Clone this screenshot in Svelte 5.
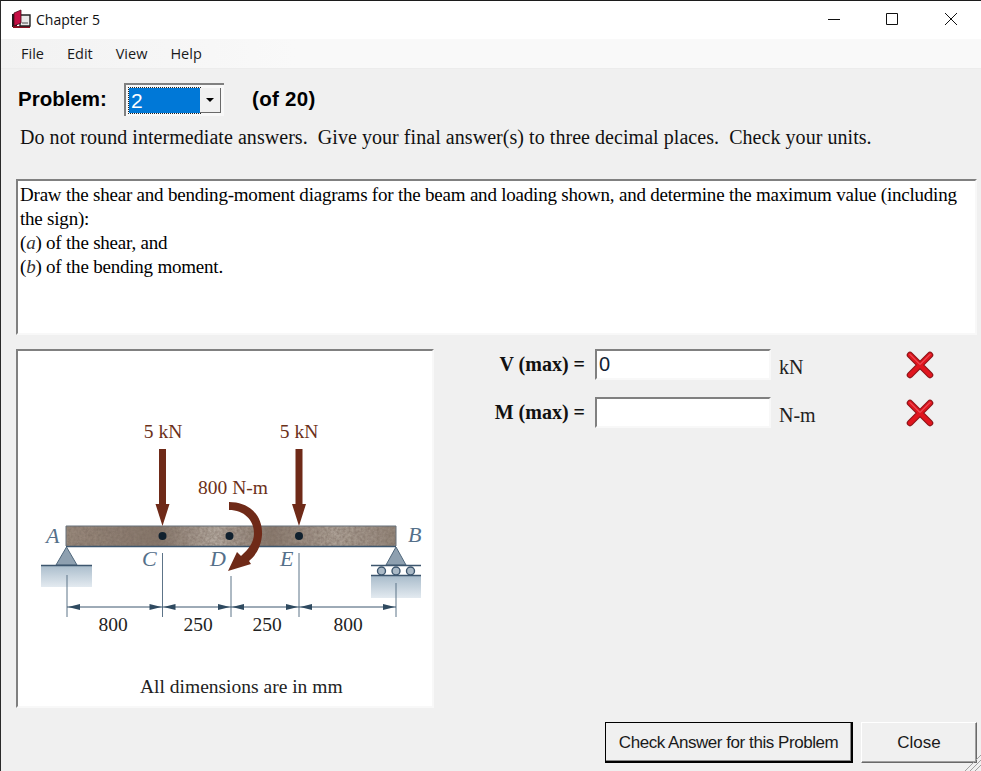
<script>
	let vMax = $state('0');
	let mMax = $state('');

	const menus = ['File', 'Edit', 'View', 'Help'];
	const forces = [162.5, 299];
	const dims = [
		{ from: 67, to: 162.5, text: '800', tx: 113 },
		{ from: 162.5, to: 231, text: '250', tx: 198 },
		{ from: 231, to: 299, text: '250', tx: 267 },
		{ from: 299, to: 396, text: '800', tx: 348 }
	];
</script>

{#snippet cross()}
	<svg class="cross" viewBox="0 0 30 30" width="30" height="30" aria-hidden="true">
		<path d="M5 5l20 20M25 5L5 25" stroke="#8a1418" stroke-width="6.500" stroke-linecap="round" fill="none" />
		<path d="M5 5l20 20M25 5L5 25" stroke="#e0161f" stroke-width="4.500" stroke-linecap="round" fill="none" />
		<path d="M5 4.500l10 10 10-10" stroke="#f56a74" stroke-width="1" stroke-linecap="round" fill="none" />
	</svg>
{/snippet}

<div class="window">
	<header class="titlebar">
		<svg class="app-icon" viewBox="0 0 20 20" width="20" height="20" aria-hidden="true">
			<path d="M1 5h5v13H1z" fill="#1c1c1c" />
			<path d="M2 17h17v2H2z" fill="#8a1022" />
			<path d="M9 6h10v11H9z" fill="#e8e8e8" stroke="#222" stroke-width="1.400" />
			<path d="M11 13h6v2h-6z" fill="#999" />
			<path d="M3 4l7-3v13l-7 3z" fill="#c40f44" stroke="#4a0a18" stroke-width="0.800" />
		</svg>
		<span class="title">Chapter 5</span>
		<div class="controls">
			<svg class="min" viewBox="0 0 12 12" width="12" height="12" aria-hidden="true"><path d="M0 6.500h12" stroke="#111" fill="none" /></svg>
			<svg viewBox="0 0 12 12" width="12" height="12" aria-hidden="true"><path d="M.5.5h11v11H.5z" stroke="#111" fill="none" /></svg>
			<svg viewBox="0 0 12 12" width="12" height="12" aria-hidden="true"><path d="M0 0l12 12M12 0L0 12" stroke="#111" fill="none" /></svg>
		</div>
	</header>

	<nav class="menubar">
		{#each menus as item}
			<span>{item}</span>
		{/each}
	</nav>

	<main class="content">
		<div class="problem-row">
			<span class="problem-label">Problem:</span>
			<div class="combo">
				<div class="combo-value"><span>2</span></div>
				<div class="combo-btn"><i></i></div>
			</div>
			<span class="problem-label of">(of 20)</span>
		</div>

		<p class="instructions">Do not round intermediate answers.&nbsp; Give your final answer(s) to three decimal places.&nbsp; Check your units.</p>

		<div class="question inset">
			Draw the shear and bending-moment diagrams for the beam and loading shown, and determine the maximum value (including the sign):<br />
			(<em>a</em>) of the shear, and<br />
			(<em>b</em>) of the bending moment.
		</div>

		<div class="work-row">
			<figure class="figure inset">
				<svg viewBox="18 351 414 355" width="414" height="355" role="img" aria-label="Beam with loads">
					<defs>
						<linearGradient id="steel" x1="0" x2="1" y1="0" y2="0">
							<stop offset="0" stop-color="#9a8a7d" />
							<stop offset="0.28" stop-color="#86766a" />
							<stop offset="0.45" stop-color="#b5aaa0" />
							<stop offset="0.62" stop-color="#8a7a6e" />
							<stop offset="0.82" stop-color="#aea297" />
							<stop offset="1" stop-color="#94867a" />
						</linearGradient>
						<linearGradient id="ground" x1="0" x2="0" y1="0" y2="1">
							<stop offset="0" stop-color="#a9bccb" />
							<stop offset="1" stop-color="#e3eaf0" />
						</linearGradient>
						<filter id="grain" x="0" y="0" width="100%" height="100%">
							<feTurbulence type="fractalNoise" baseFrequency="0.35" numOctaves="3" seed="4" />
							<feColorMatrix values="0 0 0 0 0.2  0 0 0 0 0.15  0 0 0 0 0.12  0 0 0 1.2 -0.3" />
							<feComposite in2="SourceGraphic" operator="in" />
							<feMerge>
								<feMergeNode in="SourceGraphic" />
								<feMergeNode />
							</feMerge>
						</filter>
					</defs>

					<!-- beam -->
					<rect x="66" y="526" width="330" height="20" fill="url(#steel)" filter="url(#grain)" />
					<path d="M66 546V526H396V546" fill="none" stroke="#66707a" stroke-width="1" />
					<path d="M66 546.500H396" stroke="#3d566e" stroke-width="1.400" />
					<circle cx="162.500" cy="536" r="4" fill="#10202e" />
					<circle cx="229.500" cy="536" r="4" fill="#10202e" />
					<circle cx="299" cy="536" r="4" fill="#10202e" />

					<!-- supports -->
					<rect x="41" y="565" width="51" height="22" fill="url(#ground)" />
					<path d="M66.500 547L77 565H56z" fill="#8ea0b0" stroke="#4f677c" />
					<path d="M41 565.500H92" stroke="#3d566e" stroke-width="1.400" />
					<rect x="371" y="576" width="50" height="22" fill="url(#ground)" />
					<path d="M396 547L406 565H386z" fill="#8ea0b0" stroke="#4f677c" />
					<path d="M371 565.500H421M371 575.500H421" stroke="#3d566e" stroke-width="1.400" />
					<g fill="#a9b8c5" stroke="#3d566e" stroke-width="1.400">
						<circle cx="381.500" cy="571" r="4" />
						<circle cx="396" cy="571" r="4" />
						<circle cx="410.500" cy="571" r="4" />
					</g>

					<!-- dimension lines -->
					<g stroke="#5d7488" stroke-width="1" fill="none">
						<path d="M67 575V617M162.500 553V617M231 576V617M299 553V617M396 583V617" />
						{#each dims as d}
							<path d="M{d.from} 607H{d.to}" stroke="#3d566e" />
						{/each}
					</g>
					<g fill="#2f4a60">
						{#each dims as d}
							<path d="M{d.from + 1} 607l12-3v6zM{d.to - 1} 607l-12-3v6z" />
						{/each}
					</g>

					<!-- loads -->
					<g fill="#6f2a18">
						{#each forces as x}
							<path d="M{x - 3.5} 449h7v55h3.500l-7 22-7-22h3.500z" />
						{/each}
						<path d="M229 502C251 502 263 517 262 535 261 547 256 555 249 561L251 564 228 571 237 552 241 556C249 549 254 542 254 533 254 520 244 510 229 510z" />
					</g>

					<!-- labels -->
					<g class="load-text">
						<text x="163" y="438" text-anchor="middle">5 kN</text>
						<text x="299" y="438" text-anchor="middle">5 kN</text>
						<text x="233" y="494" text-anchor="middle">800 N-m</text>
					</g>
					<g class="point-text">
						<text x="46" y="543">A</text>
						<text x="408" y="542">B</text>
						<text x="142" y="566">C</text>
						<text x="210" y="566">D</text>
						<text x="280" y="566">E</text>
					</g>
					<g class="dim-text">
						{#each dims as d}
							<text x={d.tx} y="631" text-anchor="middle">{d.text}</text>
						{/each}
						<text x="140" y="693">All dimensions are in mm</text>
					</g>
				</svg>
			</figure>

			<div class="answers">
				<label class="answer-label" for="vmax">V (max) =</label>
				<input id="vmax" class="inset" bind:value={vMax} />
				<span class="unit">kN</span>
				{@render cross()}

				<label class="answer-label" for="mmax">M (max) =</label>
				<input id="mmax" class="inset" bind:value={mMax} />
				<span class="unit">N-m</span>
				{@render cross()}
			</div>
		</div>

		<div class="actions">
			<button class="btn default" type="button">Check Answer for this Problem</button>
			<button class="btn close" type="button">Close</button>
		</div>
	</main>

	<svg class="grip" viewBox="0 0 18 18" width="18" height="18" aria-hidden="true">
		<path d="M2 18L18 2M7 18L18 7M12 18l6-6" stroke="#a0a0a0" fill="none" />
	</svg>
</div>

<style>
	:global(body) {
		margin: 0;
	}

	.window {
		position: relative;
		box-sizing: border-box;
		width: 981px;
		height: 771px;
		overflow: hidden;
		display: flex;
		flex-direction: column;
		background: #f0f0f0;
		border-top: 1px solid #1c1c1c;
		border-left: 1px solid #2a2a2a;
		color: #000;
	}

	.titlebar {
		display: flex;
		align-items: center;
		height: 38px;
		flex: none;
		background: #fff;
		padding-left: 10px;
		padding-bottom: 2px;
		box-sizing: border-box;
		font-family: 'Open Sans', 'Noto Sans', sans-serif;
		font-size: 14px;
	}

	.app-icon {
		margin-right: 5px;
	}

	.title {
		color: #111;
	}

	.controls {
		margin-left: auto;
		display: flex;
		gap: 47px;
		padding-right: 24px;
	}

	.controls .min {
		margin-right: -1px;
	}

	.menubar {
		display: flex;
		align-items: center;
		gap: 23px;
		height: 30px;
		flex: none;
		padding-left: 20px;
		box-sizing: border-box;
		background: linear-gradient(to right, #f2f2f2, #f9f9f9 30%);
		border-bottom: 1px solid #ececec;
		font-family: 'Open Sans', 'Noto Sans', sans-serif;
		font-size: 14.5px;
		color: #1a1a1a;
	}

	.content {
		flex: 1;
		display: flex;
		flex-direction: column;
		padding: 14px 3px 8px 15px;
		min-height: 0;
	}

	.problem-row {
		display: flex;
		align-items: center;
		height: 33px;
	}

	.problem-label {
		font-family: 'Liberation Sans', Arial, sans-serif;
		font-weight: 700;
		font-size: 20.5px;
		padding: 0 0 2px 2px;
		width: 106px;
	}

	.problem-label.of {
		width: auto;
		margin-left: 26px;
		letter-spacing: 0.3px;
	}

	.combo {
		box-sizing: border-box;
		width: 100px;
		height: 33px;
		display: flex;
		padding: 3px;
		background: #f8f8f8;
		border-top: 2px solid #808080;
		border-left: 2px solid #808080;
	}

	.combo-value {
		flex: 1;
		background: #0078d7;
		outline: 1px dotted #222;
		color: #fff;
		font-family: 'Liberation Sans', Arial, sans-serif;
		font-size: 21px;
		line-height: 25px;
		padding-left: 2px;
	}

	.combo-btn {
		width: 20px;
		background: #f0f0f0;
		border-right: 1px solid #696969;
		border-bottom: 1px solid #696969;
		display: flex;
		align-items: center;
		justify-content: center;
	}

	.combo-btn i {
		border-left: 4px solid transparent;
		border-right: 4px solid transparent;
		border-top: 4px solid #000;
	}

	.instructions {
		margin: 9px 0 0 4px;
		height: 54px;
		font-family: 'Liberation Serif', 'Times New Roman', serif;
		font-size: 20px;
		line-height: 24px;
		color: #111;
		letter-spacing: 0.05px;
	}

	.inset {
		box-sizing: border-box;
		background: #fff;
		border-style: solid;
		border-width: 2px;
		border-color: #808080 #f8f8f8 #f8f8f8 #808080;
	}

	.question {
		width: 961px;
		height: 156px;
		flex: none;
		padding: 2px 2px 0 2px;
		font-family: 'Liberation Serif', 'Times New Roman', serif;
		font-size: 19px;
		line-height: 24px;
		letter-spacing: -0.21px;
	}

	.question em {
		color: #333;
	}

	.work-row {
		display: flex;
		margin-top: 14px;
		flex: none;
	}

	.figure {
		margin: 0;
		width: 418px;
		height: 359px;
		flex: none;
	}

	.figure svg {
		display: block;
	}

	.load-text text {
		font-family: 'Liberation Serif', serif;
		font-size: 19.5px;
		fill: #6b3018;
	}

	.point-text text {
		font-family: 'Liberation Serif', serif;
		font-style: italic;
		font-size: 22px;
		fill: #55708a;
	}

	.dim-text text {
		font-family: 'Liberation Serif', serif;
		font-size: 19.5px;
		fill: #222;
	}

	.answers {
		display: grid;
		grid-template-columns: 151px 176px 144px 30px;
		grid-auto-rows: 31px;
		row-gap: 17px;
		align-items: center;
		align-content: start;
	}

	.answer-label {
		font-family: 'Liberation Serif', 'Times New Roman', serif;
		font-weight: 700;
		font-size: 20px;
		text-align: right;
		color: #111;
	}

	.answers input {
		width: 176px;
		height: 31px;
		margin-left: 10px;
		padding: 0 2px;
		font-family: 'Liberation Sans', Arial, sans-serif;
		font-size: 20px;
		color: #123;
		outline: none;
		border-radius: 0;
	}

	.unit {
		font-family: 'Liberation Serif', 'Times New Roman', serif;
		font-size: 20px;
		color: #222;
		padding: 5px 0 0 18px;
	}

	.cross {
		justify-self: start;
		margin-top: 1px;
	}

	.actions {
		display: flex;
		justify-content: flex-end;
		gap: 8px;
		margin-top: auto;
		padding-right: 1px;
	}

	.btn {
		box-sizing: border-box;
		height: 41px;
		background: #f0f0f0;
		font-family: 'Liberation Sans', Arial, sans-serif;
		font-size: 17px;
		color: #1a1a1a;
		padding: 1px 0 0;
		border-radius: 0;
		cursor: pointer;
	}

	.btn.default {
		width: 248px;
		letter-spacing: -0.45px;
		border: 1px solid #000;
		border-right-width: 2px;
		border-bottom-width: 2px;
		box-shadow: inset -1px -1px 0 #888;
	}

	.btn.close {
		width: 116px;
		border: 1px solid;
		border-color: #fff #696969 #696969 #fff;
		box-shadow: inset -1px -1px 0 #a0a0a0;
	}

	.grip {
		position: absolute;
		right: 0;
		bottom: 0;
	}
</style>
